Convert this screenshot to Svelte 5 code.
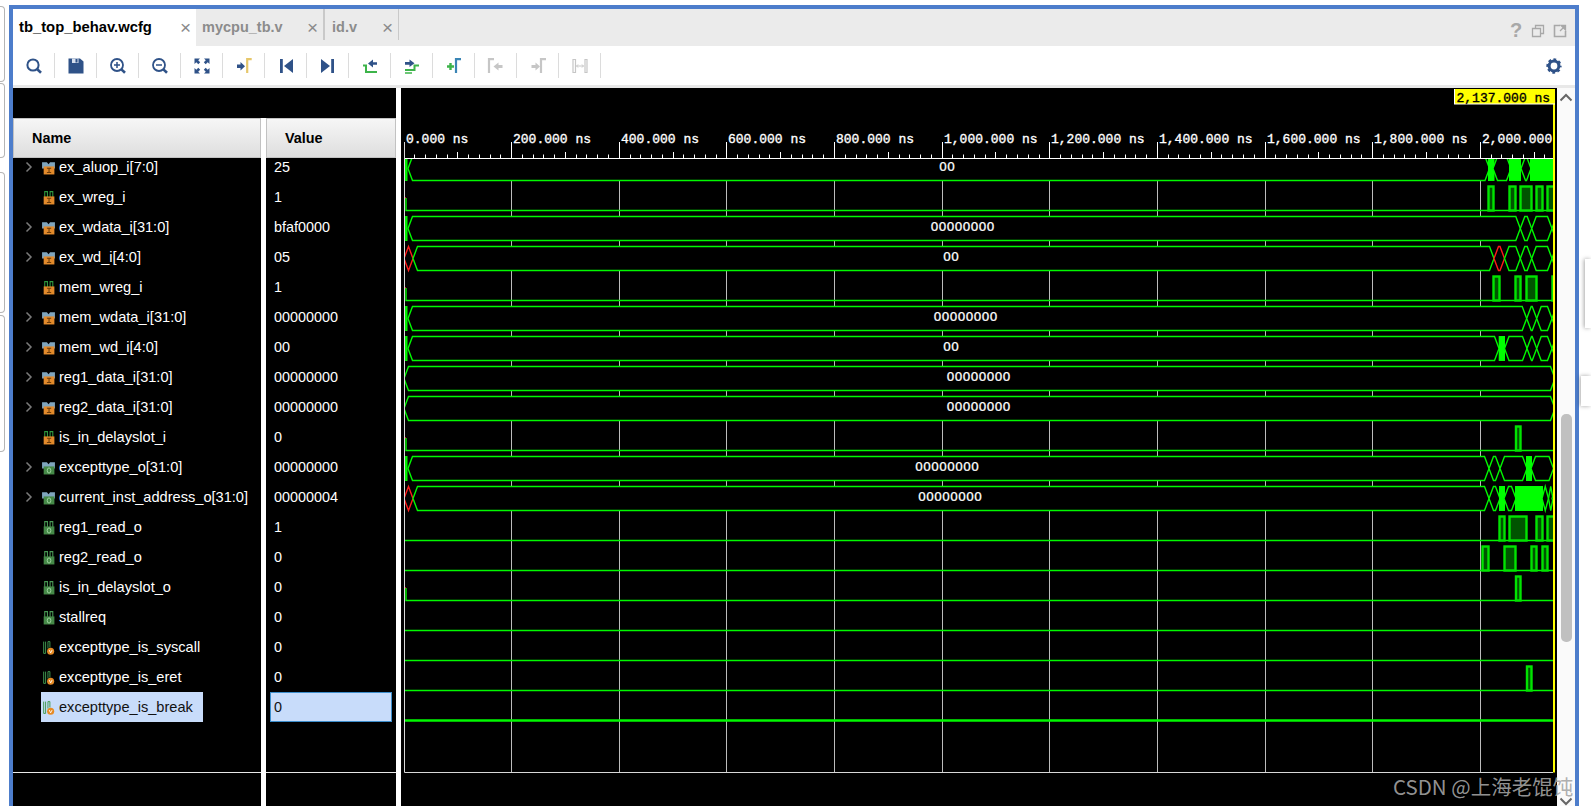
<script>
  const rows = [
    { name: 'ex_aluop_i[7:0]', value: '25', icon: 'bi', wave: { left: 'block', label: '00', lx: 947, items: [['h',408,1489.5],['b',1488,1494.5],['h',1493,1511],['b',1509,1521],['h',1521,1531],['b',1530,1553]] } },
    { name: 'ex_wreg_i', value: '1', icon: 'wi', wave: { tick: true, pulses: [[1488,1494],[1509,1516],[1520,1532],[1536,1543],[1547,1556]] } },
    { name: 'ex_wdata_i[31:0]', value: 'bfaf0000', icon: 'bi', wave: { left: 'block', label: '00000000', lx: 962.5, items: [['h',408,1520.3],['h',1520.3,1531.7],['h',1531.7,1552],['h',1552,1562]] } },
    { name: 'ex_wd_i[4:0]', value: '05', icon: 'bi', wave: { label: '00', lx: 951, items: [['r',404,413],['h',413,1494],['r',1494,1504.5],['h',1504.5,1520.3],['h',1520.3,1531.7],['h',1531.7,1552],['h',1552,1562]] } },
    { name: 'mem_wreg_i', value: '1', icon: 'wi', wave: { tick: true, pulses: [[1493,1500],[1515,1521],[1526,1537],[1552,1558]] } },
    { name: 'mem_wdata_i[31:0]', value: '00000000', icon: 'bi', wave: { left: 'block', label: '00000000', lx: 965.5, items: [['h',408,1526.7],['h',1526.7,1536.7],['h',1536.7,1552],['h',1552,1562]] } },
    { name: 'mem_wd_i[4:0]', value: '00', icon: 'bi', wave: { left: 'block', label: '00', lx: 951, items: [['h',408,1499],['b',1498.7,1505],['h',1504.5,1527],['h',1527,1536.7],['h',1536.7,1552],['h',1552,1562]] } },
    { name: 'reg1_data_i[31:0]', value: '00000000', icon: 'bi', wave: { label: '00000000', lx: 978.5, items: [['h',404,1555]] } },
    { name: 'reg2_data_i[31:0]', value: '00000000', icon: 'bi', wave: { label: '00000000', lx: 978.5, items: [['h',404,1555]] } },
    { name: 'is_in_delayslot_i', value: '0', icon: 'wi', wave: { tick: true, pulses: [[1515.5,1521]] } },
    { name: 'excepttype_o[31:0]', value: '00000000', icon: 'bo', wave: { left: 'block', label: '00000000', lx: 947, items: [['h',408,1489],['h',1489,1500],['h',1500,1527],['b',1526,1532],['h',1531,1553.5]] } },
    { name: 'current_inst_address_o[31:0]', value: '00000004', icon: 'bo', wave: { label: '00000000', lx: 950, items: [['r',404,413],['h',413,1489],['h',1489,1500],['b',1499,1505],['h',1504,1516],['b',1515,1543],['h',1542,1548.5],['h',1548.5,1553],['h',1552,1562]] } },
    { name: 'reg1_read_o', value: '1', icon: 'wo', wave: { pulses: [[1499,1505],[1509,1527],[1536,1543],[1547,1556]] } },
    { name: 'reg2_read_o', value: '0', icon: 'wo', wave: { pulses: [[1482,1489],[1504,1516],[1531,1537],[1542,1548]] } },
    { name: 'is_in_delayslot_o', value: '0', icon: 'wo', wave: { tick: true, pulses: [[1515.5,1521]] } },
    { name: 'stallreq', value: '0', icon: 'wo', wave: { pulses: [] } },
    { name: 'excepttype_is_syscall', value: '0', icon: 'wv', wave: { pulses: [] } },
    { name: 'excepttype_is_eret', value: '0', icon: 'wv', wave: { pulses: [[1526.5,1532]] } },
    { name: 'excepttype_is_break', value: '0', icon: 'wv', selected: true, wave: { pulses: [], thick: true } }
  ];

  const X0 = 404;
  const STEP = 107.63;
  const majors = Array.from({ length: 11 }, (_, i) => i);
  const labels = majors.map((i) => {
    const n = i * 200;
    const s = n >= 1000 ? `${Math.floor(n / 1000)},${String(n % 1000).padStart(3, '0')}` : String(n);
    return { x: Math.floor(X0 + i * STEP), text: i === 10 ? `${s}.000` : `${s}.000 ns` };
  });
  const ticks = Array.from({ length: 108 }, (_, k) => ({
    x: Math.floor(X0 + (k * STEP) / 10) + 0.5,
    top: k % 10 === 0 ? 142 : k % 5 === 0 ? 152 : 154.5
  }));

  const top = (i) => 156 + 30 * i;
  const hex = (a, b, i) => {
    const t = top(i) + 0.5, m = t + 12, o = t + 24, w = Math.min(4.5, (b - a) / 2);
    return `${a},${m} ${a + w},${t} ${b - w},${t} ${b},${m} ${b - w},${o} ${a + w},${o}`;
  };

  const tools = ['search','save','zin','zout','fit','marker','first','last','prev','next','add','pm','nm','swap'];
</script>

{#snippet sigIcon(kind)}
  <svg class="sig" viewBox="0 0 14 14" width="15" height="15">
    {#if kind === 'bi' || kind === 'bo'}
      <path d="M1 2h4.500l1.500 2 1.500-2H13v6H1z" fill="#7fa5bd" />
    {:else if kind === 'wv'}
      <path d="M2.500 1.500v11h1.800v-11M6.500 8V1.500h1.800V7" fill="none" stroke="#3f9a50" stroke-width="0.900" />
    {:else}
      <path d="M3.500 7V1.500h2.500V7M8.500 7V1.500h2.500V7" fill="none" stroke={kind === 'wi' ? '#2f9a3f' : '#4a9a55'} stroke-width="1" />
    {/if}
    {#if kind === 'bi' || kind === 'wi'}
      <rect x="2.500" y="6" width="10" height="7.500" fill="#e28a2b" />
      <path d="M5.500 7.700h4M7.500 7.700v4M5.500 11.700h4" stroke="#6e3c08" stroke-width="1" fill="none" />
    {:else if kind === 'bo' || kind === 'wo'}
      <rect x="2.500" y="6" width="10" height="7.500" fill="#468a48" />
      <ellipse cx="7.500" cy="9.800" rx="1.700" ry="2.400" fill="none" stroke="#9fd49f" stroke-width="0.900" />
    {:else}
      <circle cx="9" cy="10.500" r="3.300" fill="#e68a25" />
      <path d="M7.700 9.400l1.300 2.600 1.300-2.600" fill="none" stroke="#fff" stroke-width="0.800" />
    {/if}
  </svg>
{/snippet}

{#snippet toolIcon(t)}
  <svg viewBox="0 0 22 22" width="22" height="22">
    {#if t === 'search'}
      <circle cx="10" cy="10" r="5.600" fill="none" stroke="#2f5288" stroke-width="2" />
      <path d="M14 14l4 3.800" stroke="#2f5288" stroke-width="2.600" />
    {:else if t === 'save'}
      <path d="M3.500 3.500h11.500l3.500 3v12h-15z" fill="#2f5288" />
      <rect x="7" y="3.500" width="6.500" height="4.500" fill="#d8e0ee" />
      <rect x="10.500" y="4" width="2" height="3.500" fill="#2f5288" />
    {:else if t === 'zin' || t === 'zout'}
      <circle cx="10" cy="10" r="6" fill="none" stroke="#2f5288" stroke-width="1.800" />
      <path d="M14.400 14.400l3.600 3.400" stroke="#2f5288" stroke-width="2.600" />
      <path d={t === 'zin' ? 'M7 10h6M10 7v6' : 'M7 10h6'} stroke="#2f5288" stroke-width="1.500" />
    {:else if t === 'fit'}
      <path d="M3.500 3.500h5.500l-1.800 1.800 2 2-1.900 1.900-2-2-1.800 1.800zM18.500 3.500v5.500l-1.800-1.800-2 2-1.900-1.900 2-2-1.800-1.800zM3.500 18.500v-5.500l1.800 1.800 2-2 1.900 1.900-2 2 1.800 1.800zM18.500 18.500h-5.500l1.800-1.800-2-2 1.900-1.900 2 2 1.800-1.800z" fill="#2f5288" />
    {:else if t === 'marker'}
      <path d="M4 9.500h3.500V7l4.500 4.200-4.500 4.200V13H4z" fill="#2f5288" />
      <path d="M14.200 18V4.200h4.500" fill="none" stroke="#e6c76b" stroke-width="2.200" />
    {:else if t === 'first'}
      <rect x="5" y="4" width="2.800" height="14" fill="#2f5288" />
      <path d="M18 4v14l-9-7z" fill="#2f5288" />
    {:else if t === 'last'}
      <rect x="14.200" y="4" width="2.800" height="14" fill="#2f5288" />
      <path d="M4 4v14l9-7z" fill="#2f5288" />
    {:else if t === 'prev'}
      <path d="M4 10.500h3v6.500h11" fill="none" stroke="#3db44a" stroke-width="2" />
      <path d="M18 7.200h-4V4.500l-5 4 5 4V9.800h4z" fill="#2f5288" />
    {:else if t === 'next'}
      <path d="M4 15h9.500v-4.500H18" fill="none" stroke="#3db44a" stroke-width="2" />
      <path d="M4 18h7" stroke="#3db44a" stroke-width="1.500" />
      <path d="M4 7h4.500V4.500l5 3.800-5 3.800V9.700H4z" fill="#2f5288" />
    {:else if t === 'add'}
      <path d="M4 11.500h7M7.500 8v7" stroke="#3db44a" stroke-width="2.400" />
      <path d="M13 18V4.200h5" fill="none" stroke="#3a85b5" stroke-width="2.200" />
    {:else if t === 'pm'}
      <path d="M4 18V4.200h5" fill="none" stroke="#c6c6c6" stroke-width="2.200" />
      <path d="M17.500 10h-4V7.500l-5 4 5 4V13h4z" fill="#c6c6c6" />
    {:else if t === 'nm'}
      <path d="M14 18V4.200h5" fill="none" stroke="#c6c6c6" stroke-width="2.200" />
      <path d="M4.500 10h4V7.500l4.500 4-4.500 4V13h-4z" fill="#c6c6c6" />
    {:else if t === 'swap'}
      <path d="M4 4.500h2.500v13H4zM16 4.500h2v13h-2z" fill="none" stroke="#c6c6c6" stroke-width="1.200" />
      <path d="M7.500 11h7M9 9.500L7.500 11 9 12.500M13 9.500l1.500 1.500-1.500 1.500" fill="none" stroke="#c6c6c6" stroke-width="1" />
    {/if}
  </svg>
{/snippet}

<div class="page">
  <div class="gutter-left">
    <div class="gbox b1"></div>
    <div class="gbox b2"></div>
    <div class="gbox b3"></div>
    <div class="gbox b4"></div>
  </div>

  <div class="window">
    <div class="tabs">
      <div class="tab active t1"><span>tb_top_behav.wcfg</span><i>×</i></div>
      <div class="tab t2"><span>mycpu_tb.v</span><i>×</i></div>
      <div class="tab t3"><span>id.v</span><i>×</i></div>
      <div class="tab-icons">
        <span class="help">?</span>
        <svg viewBox="0 0 14 14" width="14" height="14"><path d="M4.500 4.500V1.500h8v8h-3M1.500 4.500h8v8h-8z" fill="none" stroke="#a8a8a8" stroke-width="1.300" /></svg>
        <svg viewBox="0 0 14 14" width="14" height="14"><path d="M7 1.500H1.500v11h11V7" fill="none" stroke="#a8a8a8" stroke-width="1.600" /><path d="M8 1.500h4.500V6zM7 7l3-3" fill="#a8a8a8" stroke="#a8a8a8" stroke-width="1.300" /></svg>
      </div>
    </div>

    <div class="toolbar">
      {#each tools as t}
        <div class="tool">{@render toolIcon(t)}</div>
      {/each}
      <svg class="gear" viewBox="0 0 18 18" width="16" height="16">
        <circle cx="9" cy="9" r="5.500" fill="none" stroke="#2f5288" stroke-width="3.400" />
        <circle cx="9" cy="9" r="7.300" fill="none" stroke="#2f5288" stroke-width="2.600" stroke-dasharray="3.100 2.630" stroke-dashoffset="1.500" />
      </svg>
    </div>
    <div class="strip"></div>

    <div class="body">
      <div class="side">
        <div class="spacer"></div>
        <div class="cols">
          <section class="panel names">
            <div class="head">Name</div>
            <div class="list">
              {#each rows as r}
                <div class="row">
                  <span class="chev">
                    {#if r.icon === 'bi' || r.icon === 'bo'}
                      <svg viewBox="0 0 8 12" width="8" height="12"><path d="M1.500 1.500L6 6l-4.500 4.500" fill="none" stroke="#7a7a7a" stroke-width="1.500" /></svg>
                    {/if}
                  </span>
                  <span class="item" class:sel={r.selected}>
                    {@render sigIcon(r.icon)}
                    <span>{r.name}</span>
                  </span>
                </div>
              {/each}
            </div>
            <div class="foot"></div>
          </section>

          <section class="panel values">
            <div class="head">Value</div>
            <div class="list">
              {#each rows as r}
                <div class="row val"><span class="vtext" class:sel={r.selected}>{r.value}</span></div>
              {/each}
            </div>
            <div class="foot"></div>
          </section>
        </div>
      </div>

      <section class="wave">
        <svg viewBox="401 88 1156 718" width="1156" height="718">
          <defs>
            <clipPath id="wclip"><rect x="404" y="159" width="1149" height="613" /></clipPath>
            <clipPath id="rclip"><rect x="401" y="120" width="1153" height="40" /></clipPath>
          </defs>

          <g clip-path="url(#rclip)">
            {#each labels as l}
              <text class="rul" x={l.x + 2} y="143">{l.text}</text>
            {/each}
            {#each ticks as t}
              <path d="M{t.x} {t.top}V158" stroke="#fff" stroke-width="1" />
            {/each}
            <path d="M404 158.500H1553" stroke="#fff" stroke-width="1.200" />
          </g>

          <g>
            {#each majors as i}
              <path d="M{Math.floor(X0 + i * STEP) + 0.5} 159V772" stroke="#bcbcbc" stroke-width="1" />
            {/each}
          </g>

          <g clip-path="url(#wclip)">
            {#each rows as r, i}
              {@const w = r.wave}
              {@const y0 = top(i)}
              {#if w.items}
                {#if w.left === 'block'}
                  <rect x="404" y={y0} width="3.500" height="25" fill="#00f000" />
                {/if}
                {#each w.items as it}
                  {#if it[0] === 'b'}
                    <rect x={it[1]} y={y0} width={it[2] - it[1]} height="25" fill="#00ff00" />
                  {:else}
                    <polygon points={hex(it[1], it[2], i)} fill="#000" stroke={it[0] === 'r' ? '#ff1a1a' : '#00f800'} stroke-width="1.400" />
                  {/if}
                {/each}
                <text class="lbl" x={w.lx} y={y0 + 15}>{w.label}</text>
              {:else}
                {#if w.tick}
                  <path d="M404 {y0 + 12}h2" stroke="#ff1a1a" stroke-width="1.400" />
                  <path d="M406 {y0 + 12}V{y0 + 24.500}H1553" fill="none" stroke="#00f800" stroke-width="1.400" />
                {:else}
                  <path d="M404 {y0 + 24.500}H1553" stroke="#00f800" stroke-width={w.thick ? 2.400 : 1.400} />
                {/if}
                {#each w.pulses as p}
                  <rect x={p[0] + 0.5} y={y0 + 0.5} width={p[1] - p[0] - 1} height="24" fill="#005400" stroke="#00e400" stroke-width="2.400" />
                {/each}
              {/if}
            {/each}
          </g>

          <path d="M404.500 142V772.500H1553" fill="none" stroke="#d8d8d8" stroke-width="1" />
          <rect x="1553" y="104" width="2" height="668.500" fill="#ffff00" />
          <rect x="1454" y="89" width="101" height="15.500" fill="#fff" />
          <rect x="1455" y="89" width="100" height="14.500" fill="#ffff00" />
          <text class="cur" x="1456.500" y="101.500">2,137.000 ns</text>
        </svg>
      </section>

      <aside class="scroll">
        <svg class="arrow up" viewBox="0 0 14 9" width="14" height="9"><path d="M1.500 7.500L7 2l5.500 5.500" fill="none" stroke="#666" stroke-width="2" /></svg>
        <div class="thumb"></div>
        <svg class="arrow down" viewBox="0 0 14 9" width="14" height="9"><path d="M1.500 1.500L7 7l5.500-5.500" fill="none" stroke="#666" stroke-width="2" /></svg>
      </aside>
    </div>
  </div>

  <div class="gutter-right">
    <div class="rbox r1"></div>
    <div class="rbox r2"></div>
  </div>

  <div class="mark">CSDN @上海老馄饨</div>
</div>

<style>
  :global(body) { margin: 0; background: #fff; }
  .page {
    position: relative;
    width: 1591px;
    height: 806px;
    display: flex;
    overflow: hidden;
    background: #fff;
    font-family: "Liberation Sans", Arial, sans-serif;
  }
  .gutter-left { width: 9px; flex: none; padding-top: 6px; box-sizing: border-box; }
  .gbox {
    width: 5px;
    box-sizing: border-box;
    border: 1px solid #b5b5b5;
    border-left: none;
    border-radius: 0 4px 4px 0;
  }
  .b1 { height: 76px; }
  .b2 { height: 75px; margin-top: 1px; }
  .b3 { height: 141px; margin-top: 14px; }
  .b4 { height: 137px; margin-top: 2px; }

  .window {
    width: 1570px;
    height: 801px;
    margin-top: 5px;
    flex: none;
    box-sizing: border-box;
    border: solid #4d7dcb;
    border-width: 4px 4px 0;
    display: flex;
    flex-direction: column;
    overflow: hidden;
  }
  .tabs { height: 37px; flex: none; display: flex; background: #ebebeb; }
  .tab {
    display: flex;
    box-sizing: border-box;
    padding: 10px 0 0 6px;
    font-size: 14.500px;
    font-weight: 700;
    color: #8c8c8c;
    position: relative;
    border-right: 2px solid #c9c9c9;
    height: 31px;
  }
  .tab i {
    position: absolute;
    right: 5px;
    top: 9px;
    font-style: normal;
    font-weight: 400;
    font-size: 19px;
    line-height: 20px;
    color: #8a8a8a;
  }
  .tab.active { background: #fff; color: #000; border-right: none; height: 37px; font-size: 14.800px; }
  .t1 { width: 183px; }
  .t2 { width: 129px; }
  .t3 { width: 74px; border-right-width: 1px; padding-left: 7px; }
  .tab-icons {
    margin-left: auto;
    display: flex;
    align-items: center;
    gap: 8px;
    padding: 6px 8px 0 0;
  }
  .help { font-size: 20px; font-weight: 700; color: #a8a8a8; width: 14px; text-align: center; }

  .toolbar { height: 39px; flex: none; display: flex; align-items: center; background: #fff; padding-right: 13px; }
  .tool {
    width: 42px;
    height: 25px;
    box-sizing: border-box;
    border-right: 1px solid #dcdcdc;
    display: flex;
    align-items: center;
    justify-content: center;
  }
  .gear { margin-left: auto; }
  .strip { height: 3px; flex: none; background: #e8e8e8; }

  .body { height: 718px; flex: none; display: flex; background: #fff; }
  .side { width: 383px; margin-right: 5px; flex: none; display: flex; flex-direction: column; }
  .spacer { height: 30px; flex: none; background: #000; }
  .cols { flex: 1; display: flex; gap: 5px; min-height: 0; }
  .panel { background: #000; display: flex; flex-direction: column; flex: none; }
  .names { width: 248px; }
  .values { width: 130px; }
  .head {
    height: 40px;
    flex: none;
    box-sizing: border-box;
    border: 1px solid #c2c2c2;
    background: linear-gradient(#f6f6f6, #dedede);
    font-size: 14.400px;
    font-weight: 700;
    line-height: 38px;
    color: #000;
    padding-left: 18px;
  }
  .list {
    height: 614px;
    flex: none;
    overflow: hidden;
    color: #fff;
    font-size: 14.400px;
    box-sizing: border-box;
  }
  .names .list { font-size: 14.600px; }
  .row { height: 30px; display: flex; align-items: center; }
  .row:first-child { margin-top: -6px; }
  .chev { width: 28px; padding-left: 12px; box-sizing: border-box; flex: none; display: flex; align-items: center; }
  .item { display: flex; align-items: center; height: 30px; padding: 0 10px 0 0; gap: 3px; }
  .item.sel { background: #c8dcfa; color: #111; }
  .val { padding-left: 4px; }
  .vtext { display: block; width: 122px; height: 30px; line-height: 30px; box-sizing: border-box; padding-left: 4px; }
  .vtext.sel {
    background: #c8dcfa;
    border: 1px solid #3d8ecc;
    color: #111;
    padding-left: 3px;
    line-height: 28px;
  }
  .foot { flex: 1; border-top: 1px solid #e8e8e8; }

  .wave { width: 1156px; flex: none; background: #000; }
  .wave svg { display: block; }
  .rul, .cur { font-family: "Liberation Mono", monospace; font-size: 13px; stroke-width: 0.35px; }
  .rul { fill: #fff; stroke: #fff; }
  .cur { fill: #000; stroke: #000; }
  .lbl { fill: #fff; stroke: #fff; stroke-width: 0.2px; font-family: "DejaVu Sans", sans-serif; font-size: 12.600px; text-anchor: middle; }

  .scroll {
    width: 18px;
    flex: none;
    background: #fafafa;
    display: flex;
    flex-direction: column;
    align-items: center;
    box-sizing: border-box;
    padding-top: 5px;
  }
  .thumb {
    width: 11px;
    height: 229px;
    margin: 312px 0 0;
    background: #c0c0c0;
    border-radius: 5px;
  }
  .arrow { flex: none; }
  .arrow.down { margin-top: 155px; }

  .gutter-right { flex: 1; display: flex; flex-direction: column; align-items: flex-end; padding-top: 259px; }
  .rbox { background: #fff; box-shadow: -1px 0 4px rgba(0, 0, 0, 0.35); }
  .r1 { width: 6px; height: 69px; }
  .r2 { width: 10px; height: 30px; margin-top: 48px; }

  .mark {
    position: absolute;
    left: 1393px;
    top: 771px;
    font-family: "Noto Sans CJK SC", "Liberation Sans", sans-serif;
    font-size: 20.500px;
    line-height: 30px;
    color: rgba(165, 165, 165, 0.9);
    white-space: nowrap;
  }
</style>
